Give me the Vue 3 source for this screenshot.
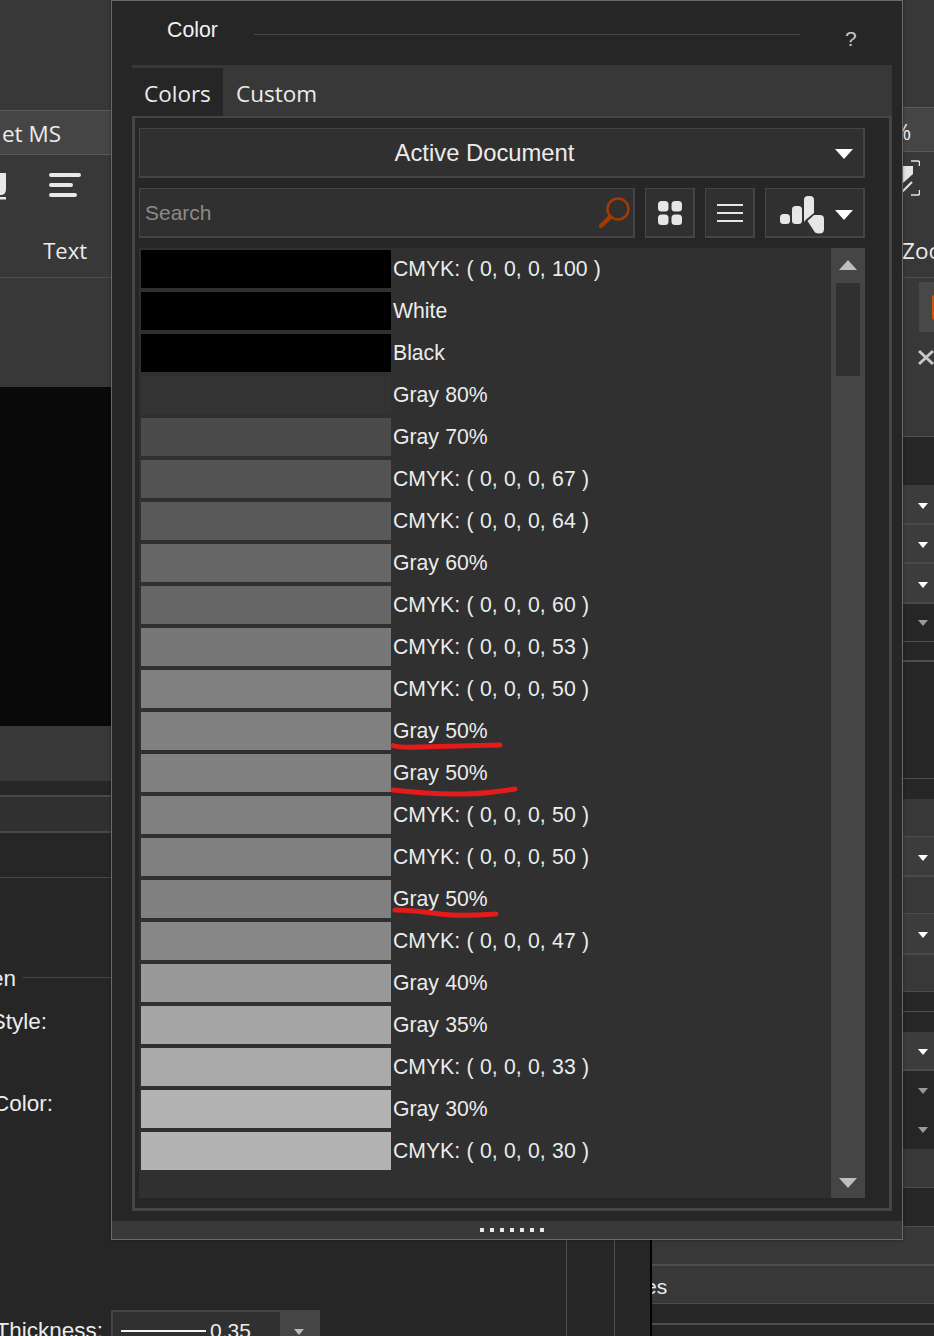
<script setup>
const swatches = [
  ['#000000', 'CMYK: ( 0, 0, 0, 100 )'],
  ['#000000', 'White'],
  ['#000000', 'Black'],
  ['#333333', 'Gray 80%'],
  ['#4b4b4b', 'Gray 70%'],
  ['#535353', 'CMYK: ( 0, 0, 0, 67 )'],
  ['#595959', 'CMYK: ( 0, 0, 0, 64 )'],
  ['#666666', 'Gray 60%'],
  ['#666666', 'CMYK: ( 0, 0, 0, 60 )'],
  ['#777777', 'CMYK: ( 0, 0, 0, 53 )'],
  ['#808080', 'CMYK: ( 0, 0, 0, 50 )'],
  ['#808080', 'Gray 50%'],
  ['#808080', 'Gray 50%'],
  ['#808080', 'CMYK: ( 0, 0, 0, 50 )'],
  ['#808080', 'CMYK: ( 0, 0, 0, 50 )'],
  ['#808080', 'Gray 50%'],
  ['#878787', 'CMYK: ( 0, 0, 0, 47 )'],
  ['#999999', 'Gray 40%'],
  ['#a6a6a6', 'Gray 35%'],
  ['#aaaaaa', 'CMYK: ( 0, 0, 0, 33 )'],
  ['#b3b3b3', 'Gray 30%'],
  ['#b3b3b3', 'CMYK: ( 0, 0, 0, 30 )']
]

const rightRows = [
  { h: 48, k: 'dark' },
  { h: 40, k: 'drop', a: 'on' },
  { h: 39, k: 'drop', a: 'on' },
  { h: 40, k: 'drop', a: 'on' },
  { h: 38, k: 'dark', a: 'off', line: true },
  { h: 20, k: 'dark', line: true, thick: true },
  { h: 117, k: 'dark', line: true },
  { h: 20, k: 'dark' },
  { h: 38, k: 'panel', line: true },
  { h: 40, k: 'drop', a: 'on' },
  { h: 37, k: 'panel', line: true },
  { h: 41, k: 'drop', a: 'on' },
  { h: 37, k: 'panel', line: true },
  { h: 20, k: 'dark', line: true },
  { h: 20, k: 'dark' },
  { h: 39, k: 'drop', a: 'on' },
  { h: 39, k: 'dark', a: 'off' },
  { h: 39, k: 'dark', a: 'off' },
  { h: 39, k: 'panel', line: true },
  { h: 39, k: 'dark', line: true },
  { h: 39, k: 'panel', line: true, thick: true },
  { h: 38, k: 'panel', line: true, text: 'es' },
  { h: 21, k: 'dark', line: true, thick: true }
]
</script>

<template>
  <div class="screen">
    <section class="pane-left">
      <div class="l-top"></div>
      <div class="l-font"><span>et MS</span></div>
      <div class="l-tools">
        <div class="l-icons">
          <svg class="u-icon" width="7" height="30" viewBox="0 0 7 30">
            <path d="M-6 2v15c0 5 3 7 7 7s5-3 5-7V2z" fill="#e8e8e8" />
            <rect x="-2" y="26" width="8" height="2.5" fill="#e8e8e8" />
          </svg>
          <svg class="align-icon" width="32" height="24" viewBox="0 0 32 24">
            <rect width="32" height="4" rx="2" fill="#e8e8e8" />
            <rect y="10" width="24" height="4" rx="2" fill="#e8e8e8" />
            <rect y="20" width="28" height="4" rx="2" fill="#e8e8e8" />
          </svg>
        </div>
        <span class="l-text">Text</span>
      </div>
      <div class="l-panel"></div>
      <div class="l-black"></div>
      <div class="l-under"></div>
      <div class="l-strip"></div>
      <div class="l-gap"></div>
      <div class="l-fields">
        <div class="pen-row">
          <span class="field-label pen-label">en</span>
          <span class="pen-rule"></span>
        </div>
        <div class="field-row style-row"><span class="field-label">Style:</span></div>
        <div class="field-row color-row"><span class="field-label">Color:</span></div>
        <div class="thick-row">
          <span class="thick-label">Thickness:</span>
          <div class="thick-select">
            <div class="thick-value">
              <span class="thick-line"></span>
              <span class="thick-num">0.35</span>
            </div>
            <div class="thick-btn"><i class="tri-small"></i></div>
          </div>
        </div>
      </div>
    </section>

    <div class="gutter"></div>
    <div class="gutter second"></div>

    <section class="pane-right">
      <div class="r-top"></div>
      <div class="r-font"><span>%</span></div>
      <div class="r-tools">
        <svg class="fit-icon" width="17" height="36" viewBox="0 0 17 36">
          <path d="M-8 6h18v8L0 23h-8z" fill="#e4e4e4" />
          <path d="M-2 33l11-11" stroke="#e4e4e4" stroke-width="2" fill="none" />
          <path d="M8 1h7q1.500 0 1.500 1.500V6M8 35h7q1.500 0 1.500-1.500V30" fill="none" stroke="#e4e4e4" stroke-width="1.500" />
        </svg>
        <span class="zoom-text">Zoom</span>
      </div>
      <div class="r-panel">
        <div class="orange-btn"><i></i></div>
        <svg class="x-icon" width="16" height="17" viewBox="0 0 16 17">
          <path d="M1 2l14 13M15 2L1 15" stroke="#c8c8c8" stroke-width="3" fill="none" />
        </svg>
      </div>
      <div
        v-for="(r, i) in rightRows"
        :key="i"
        class="r-row"
        :class="[r.k, { line: r.line, thick: r.thick }]"
        :style="{ height: r.h + 'px' }"
      >
        <i v-if="r.a" class="tri-small" :class="{ on: r.a === 'on' }"></i>
        <span v-if="r.text" class="es">{{ r.text }}</span>
      </div>
      <div class="r-end"></div>
    </section>

    <div class="dialog">
      <header class="title-row">
        <span class="title">Color</span>
        <span class="title-rule"></span>
        <span class="help">?</span>
      </header>
      <nav class="tabs">
        <span class="tab active">Colors</span>
        <span class="tab">Custom</span>
      </nav>
      <div class="content">
        <div class="doc-select">
          <span>Active Document</span>
          <i class="tri-big"></i>
        </div>
        <div class="toolbar">
          <div class="search box">
            <span>Search</span>
            <svg width="32" height="34" viewBox="0 0 32 34">
              <circle cx="19" cy="13" r="10.500" fill="none" stroke="#a33a00" stroke-width="2.500" />
              <path d="M11 21L2 30" stroke="#a33a00" stroke-width="4.500" stroke-linecap="round" />
            </svg>
          </div>
          <div class="tool box">
            <svg width="24" height="24" viewBox="0 0 24 24">
              <rect width="10.500" height="10.500" rx="3.500" fill="#e6e6e6" />
              <rect x="13.500" width="10.500" height="10.500" rx="3.500" fill="#e6e6e6" />
              <rect y="13.500" width="10.500" height="10.500" rx="3.500" fill="#e6e6e6" />
              <rect x="13.500" y="13.500" width="10.500" height="10.500" rx="3.500" fill="#e6e6e6" />
            </svg>
          </div>
          <div class="tool box">
            <svg width="26" height="18" viewBox="0 0 26 18">
              <rect width="26" height="2" fill="#e6e6e6" />
              <rect y="8" width="26" height="2" fill="#e6e6e6" />
              <rect y="16" width="26" height="2" fill="#e6e6e6" />
            </svg>
          </div>
          <div class="sort box">
            <svg width="44" height="38" viewBox="0 0 44 38">
              <rect x="0" y="18" width="10" height="10" rx="3.500" fill="#e6e6e6" />
              <rect x="12" y="10" width="10" height="18" rx="3.500" fill="#e6e6e6" />
              <path d="M24 4Q24 0 28 0h2Q34 0 34 4V17L25.500 24 24.500 26Q24 25 24 23z" fill="#e6e6e6" />
              <path d="M34 19h6Q44 19 44 23V33Q44 37.500 39.500 37.500T34 35L27.500 25z" fill="#e6e6e6" />
            </svg>
            <i class="tri-big"></i>
          </div>
        </div>
        <div class="list">
          <div class="rows">
            <div v-for="(s, i) in swatches" :key="i" class="row">
              <span class="swatch" :style="{ background: s[0] }"></span>
              <span class="label">{{ s[1] }}</span>
            </div>
          </div>
          <div class="scrollbar">
            <i class="tri-up"></i>
            <span class="thumb"></span>
            <i class="tri-down"></i>
          </div>
        </div>
      </div>
      <footer class="grip">
        <i v-for="n in 7" :key="n"></i>
      </footer>
    </div>

    <svg class="marks" width="934" height="1336" viewBox="0 0 934 1336">
      <path d="M393 745.500C400 748 408 747.500 420 747S470 745.500 500 745" />
      <path d="M393 790C410 792 440 794.500 465 794S500 791 515 789" />
      <path d="M395 910C410 910 425 912 440 914S480 915 496 914" />
    </svg>
  </div>
</template>

<style>
html, body { margin: 0; background: #262626; }
</style>

<style scoped>
.screen {
  position: relative;
  display: flex;
  width: 934px;
  height: 1336px;
  overflow: hidden;
  background: #262626;
  color: #ececec;
  font-family: "Liberation Sans", Arial, sans-serif;
  font-size: 21px;
}
.pane-left {
  width: 566px;
  flex: none;
  display: flex;
  flex-direction: column;
}
.pane-left > div { flex: none; }
.l-top { height: 110px; background: #383838; border-bottom: 1px solid #5a5a5a; }
.l-font {
  height: 41px;
  background: #454545;
  border-bottom: 1px solid #5a5a5a;
  width: 61px;
  padding: 2px 505px 0 0;
  display: flex;
  align-items: center;
  justify-content: flex-end;
  font-family: "Open Sans", sans-serif;
  font-size: 22.500px;
  white-space: nowrap;
}
.l-tools {
  height: 122px;
  background: #383838;
  border-bottom: 1px solid #4d4d4d;
  position: relative;
  display: flex;
  flex-direction: column;
}
.l-icons { height: 80px; display: flex; align-items: flex-start; flex: none; }
.u-icon { margin-top: 16px; flex: none; }
.align-icon { margin: 18px 0 0 42px; flex: none; }
.l-text {
  width: 87px;
  text-align: right;
  font-family: "Open Sans", sans-serif;
  font-size: 22px;
  line-height: 30px;
}
.l-panel { height: 109px; background: #383838; }
.l-black { height: 339px; background: #0a0a0a; }
.l-under { height: 55px; background: #383838; }
.l-strip {
  margin-top: 14px;
  height: 34px;
  background: #303030;
  border-top: 2px solid #484848;
  border-bottom: 2px solid #484848;
}
.l-gap { height: 44px; border-bottom: 1px solid #484848; }
.pane-left > .l-fields { flex: 1; display: flex; flex-direction: column; position: relative; min-height: 0; }
.pen-row { display: flex; align-items: center; height: 38px; margin-top: 82px; flex: none; }
.field-label { font-size: 22.500px; white-space: nowrap; display: block; }
.pen-label { width: 16px; flex: none; display: flex; justify-content: flex-end; }
.pen-rule { flex: 1; margin-left: 7px; height: 1px; background: #484848; margin-top: -3px; }
.field-row { height: 36px; width: 47px; display: flex; justify-content: flex-end; align-items: center; flex: none; }
.style-row { margin-top: 6px; }
.color-row { margin-top: 46px; width: 53px; }
.thick-row { display: flex; align-items: flex-start; margin-top: 188px; height: 40px; flex: none; }
.thick-label {
  width: 103px;
  flex: none;
  display: flex;
  justify-content: flex-end;
  font-size: 22.500px;
  line-height: 36px;
  margin-top: 3px;
  white-space: nowrap;
}
.thick-select {
  margin-left: 8px;
  width: 209px;
  height: 40px;
  box-sizing: border-box;
  border: 2px solid #454545;
  display: flex;
  background: #303030;
}
.thick-value { flex: 1; display: flex; align-items: flex-start; padding: 0 0 0 8px; position: relative; }
.thick-line { width: 85px; height: 2px; background: #f4f4f4; margin-top: 18px; }
.thick-num { margin-left: 4px; line-height: 28px; font-size: 21px; margin-top: 5px; }
.thick-btn { width: 38px; background: #454545; display: flex; justify-content: center; padding-top: 17px; box-sizing: border-box; }

.gutter { width: 48px; flex: none; box-sizing: border-box; border-left: 1px solid #4d4d4d; }
.gutter.second { width: 38px; border-right: 2px solid #000; }
.pane-right { flex: 1; min-width: 0; display: flex; flex-direction: column; overflow: hidden; }
.r-top { height: 107px; background: #383838; border-bottom: 1px solid #5a5a5a; flex: none; }
.r-font {
  height: 41px;
  flex: none;
  background: #454545;
  border-bottom: 1px solid #5a5a5a;
  padding: 2px 0 0 241px;
  display: flex;
  align-items: center;
  font-family: "Open Sans", sans-serif;
  font-size: 22px;
}
.r-tools {
  height: 125px;
  flex: none;
  background: #383838;
  border-bottom: 1px solid #4d4d4d;
  padding-left: 251px;
  box-sizing: content-box;
  display: flex;
  flex-direction: column;
}
.fit-icon { margin-top: 8px; flex: none; }
.zoom-text {
  margin-top: 40px;
  margin-left: -1px;
  font-family: "Open Sans", sans-serif;
  font-size: 22.500px;
  line-height: 30px;
  white-space: nowrap;
}
.r-panel {
  height: 159px;
  flex: none;
  background: #383838;
  border-bottom: 1px solid #4d4d4d;
  padding-left: 267px;
  display: flex;
  flex-direction: column;
  box-sizing: border-box;
}
.orange-btn {
  margin-top: 4px;
  height: 50px;
  background: #484848;
  display: flex;
  align-items: center;
  padding-left: 13px;
  flex: none;
}
.orange-btn i { width: 12px; height: 25px; background: #d2550f; border-radius: 3px; flex: none; }
.x-icon { margin: 17px 0 0 -1px; flex: none; }
.r-row {
  flex: none;
  box-sizing: border-box;
  display: flex;
  align-items: center;
  justify-content: flex-end;
  padding-right: 6px;
  position: relative;
}
.r-row.dark { background: #262626; }
.r-row.panel { background: #383838; }
.r-row.drop { background: #3c3c3c; border-bottom: 2px solid #4a4a4a; padding-top: 3px; }
.r-row.line { border-bottom: 1px solid #4d4d4d; }
.r-row.thick { border-bottom-width: 2px; }
.es { position: absolute; left: -7px; top: 7px; line-height: 28px; font-size: 21px; }
.r-end { flex: 1; background: #262626; }

.tri-small { display: block; width: 0; height: 0; border-left: 5.500px solid transparent; border-right: 5.500px solid transparent; border-top: 6px solid #999; }
.tri-small.on { border-top-color: #fff; }
.thick-btn .tri-small { border-top-color: #bbb; }

.dialog {
  position: absolute;
  left: 111px;
  top: 0;
  width: 792px;
  height: 1240px;
  box-sizing: border-box;
  border: 1px solid #6a6a6a;
  background: #262626;
  display: flex;
  flex-direction: column;
  box-shadow: 0 0 3px rgba(0, 0, 0, .4);
}
.title-row { height: 64px; flex: none; display: flex; position: relative; }
.title { margin: 15px 0 0 55px; width: 87px; flex: none; font-size: 21.300px; line-height: 28px; color: #f2f2f2; }
.title-rule { width: 546px; height: 1px; margin-top: 33px; background: #484848; flex: none; }
.help { margin: 24px 0 0 45px; line-height: 28px; font-size: 21px; color: #c8c8c8; }
.tabs {
  height: 51px;
  flex: none;
  margin: 0 10px 0 20px;
  background: #383838;
  display: flex;
  font-family: "Open Sans", sans-serif;
  font-size: 22.500px;
}
.tab { padding: 0 13px; display: flex; align-items: center; padding-top: 6px; box-sizing: border-box; }
.tab.active { background: #262626; margin-top: 3px; width: 91px; padding: 3px 0 0 12px; }
.content {
  height: 1095px;
  flex: none;
  box-sizing: border-box;
  margin: 0 10px 0 20px;
  border-style: solid;
  border-color: #454545;
  border-width: 2px 3px 3px 3px;
  padding: 10px 24px 10px 4px;
  display: flex;
  flex-direction: column;
  gap: 10px;
}
.doc-select, .box {
  box-sizing: border-box;
  background: #303030;
  border: 1px solid #454545;
  border-bottom-width: 2px;
  border-right-width: 2px;
  height: 50px;
}
.doc-select {
  position: relative;
  display: flex;
  align-items: center;
  justify-content: center;
  padding-right: 34px;
  font-size: 23.800px;
  flex: none;
}
.doc-select .tri-big { position: absolute; right: 10px; top: 20px; }
.tri-big { display: block; width: 0; height: 0; border-left: 9px solid transparent; border-right: 9px solid transparent; border-top: 10px solid #fff; }
.toolbar { display: flex; gap: 10px; height: 50px; flex: none; }
.box { display: flex; align-items: center; }
.search { width: 496px; justify-content: space-between; padding: 0 2px 0 5px; color: #8a8a8a; flex: none; }
.tool { width: 50px; justify-content: center; flex: none; }
.sort { width: 100px; flex: none; padding-left: 14px; gap: 11px; box-sizing: border-box; }
.sort svg { margin-top: 5px; flex: none; }
.sort .tri-big { margin-top: 5px; flex: none; }
.list { height: 950px; flex: none; display: flex; background: #303030; }
.rows { flex: 1; padding: 2px 0 0 2px; display: flex; flex-direction: column; gap: 4px; }
.row { height: 38px; display: flex; align-items: center; flex: none; }
.swatch { width: 250px; height: 38px; flex: none; }
.label { margin-left: 2px; font-size: 21.200px; word-spacing: .5px; white-space: nowrap; }
.scrollbar {
  width: 34px;
  flex: none;
  background: #454545;
  padding: 12px 0 10px;
  box-sizing: border-box;
  display: flex;
  flex-direction: column;
  align-items: center;
}
.tri-up { width: 0; height: 0; border-left: 9px solid transparent; border-right: 9px solid transparent; border-bottom: 10px solid #bdbdbd; }
.tri-down { width: 0; height: 0; margin-top: auto; border-left: 9px solid transparent; border-right: 9px solid transparent; border-top: 10px solid #bdbdbd; }
.thumb { width: 24px; height: 93px; margin-top: 13px; background: #303030; }
.grip {
  margin-top: 10px;
  flex: 1;
  background: #383838;
  display: flex;
  justify-content: center;
  align-items: center;
  gap: 6px;
  padding-left: 10px;
}
.grip i { width: 4px; height: 4px; background: #eaeaea; display: block; }
.marks {
  position: absolute;
  left: 0;
  top: 0;
  pointer-events: none;
  fill: none;
  stroke: #e31b1b;
  stroke-width: 5px;
  stroke-linecap: round;
}
</style>
